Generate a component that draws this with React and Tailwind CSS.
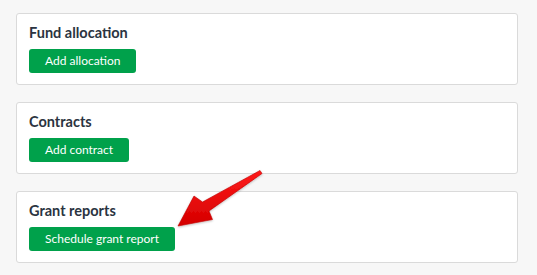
import React from 'react';

const sections = [
  { title: 'Fund allocation', action: 'Add allocation' },
  { title: 'Contracts', action: 'Add contract' },
  { title: 'Grant reports', action: 'Schedule grant report' },
];

function Arrow() {
  return (
    <svg
      className="absolute left-0 top-0 pointer-events-none"
      width="537"
      height="275"
      viewBox="0 0 537 275"
    >
      <defs>
        <filter id="sh" x="-20%" y="-20%" width="140%" height="140%">
          <feDropShadow dx="0" dy="1" stdDeviation="1" floodColor="#000" floodOpacity="0.25" />
        </filter>
        <linearGradient id="rg" x1="0" y1="0" x2="0" y2="1">
          <stop offset="0" stopColor="#ff1a1a" />
          <stop offset="1" stopColor="#d40000" />
        </linearGradient>
      </defs>
      <polygon
        points="178,226 194,196 202.5,202 260,170.5 262,173.5 209,211 212.5,219.5"
        fill="url(#rg)"
        stroke="#c00000"
        strokeWidth="0.6"
        strokeLinejoin="round"
        filter="url(#sh)"
      />
    </svg>
  );
}

export default function App() {
  return (
    <div
      className="relative w-[537px] h-[275px] bg-[#f7f7f7] px-4 pt-[13px] flex flex-col gap-[17px]"
      style={{ fontFamily: 'Lato, "Open Sans", sans-serif' }}
    >
      {sections.map((s) => (
        <div
          key={s.title}
          className="w-[502px] h-[72px] bg-white border border-[#dadada] rounded-[3px] px-3 pt-[9px] flex flex-col items-start"
        >
          <h2 className="text-[14.5px] leading-[20px] font-bold text-[#2b3441] mb-[6px]">{s.title}</h2>
          <button className="h-6 px-4 rounded-[3px] bg-[#00a14b] text-white text-[12px] leading-6 font-normal">
            {s.action}
          </button>
        </div>
      ))}
      <Arrow />
    </div>
  );
}
